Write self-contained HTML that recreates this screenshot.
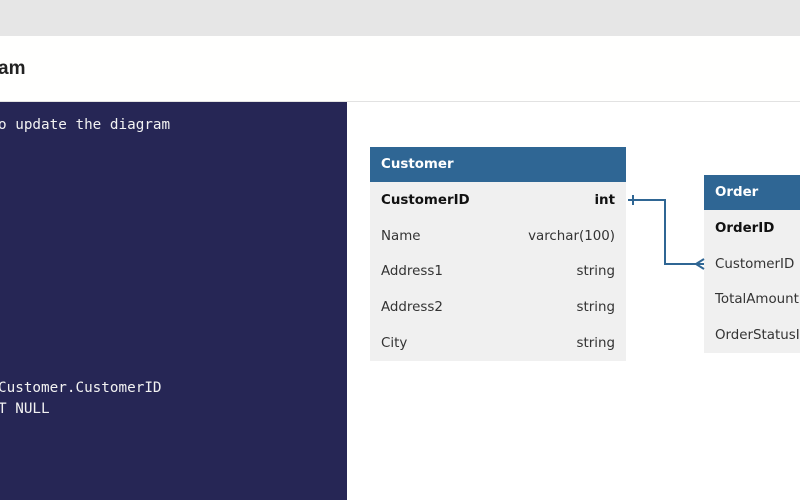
<!DOCTYPE html>
<html><head><style>
*{margin:0;padding:0;box-sizing:border-box}
body{width:800px;height:500px;overflow:hidden;background:#fff;font-family:"Liberation Sans",sans-serif;position:relative}
.top{position:absolute;left:0;top:0;width:800px;height:36px;background:#e6e6e6}
.hdr{position:absolute;left:0;top:36px;width:800px;height:66px;background:#fffffe;border-bottom:1px solid #e2e2e2}
.hdr span{position:absolute;left:-2px;top:22px;font-size:19px;font-weight:bold;color:#222}
.code{position:absolute;left:0;top:102px;width:347px;height:398px;background:#262655;color:#f2f2f2;font-family:"DejaVu Sans Mono","Liberation Mono",monospace;font-size:14.3px}
.code div{position:absolute;left:-2px;white-space:pre}
.tbl{position:absolute;background:#f0f0f0;font-family:"DejaVu Sans",sans-serif;font-size:13.4px;color:#333}
.tbl .h{background:#2f6694;color:#fff;font-weight:bold;height:35px;line-height:36px;padding-left:11px}
.tbl .r{height:35.7px;line-height:37px;padding:0 11px;display:flex;justify-content:space-between}
.b{font-weight:bold;color:#111}
</style></head><body>
<div class="top"></div>
<div class="hdr"><span>am</span></div>
<div class="code">
<div style="top:15px">o update the diagram</div>
<div style="top:278px">Customer.CustomerID</div>
<div style="top:299px">T NULL</div>
</div>
<div class="tbl" style="left:370px;top:147px;width:256px;height:214px">
<div class="h">Customer</div>
<div class="r b"><span>CustomerID</span><span>int</span></div>
<div class="r"><span>Name</span><span>varchar(100)</span></div>
<div class="r"><span>Address1</span><span>string</span></div>
<div class="r"><span>Address2</span><span>string</span></div>
<div class="r"><span>City</span><span>string</span></div>
</div>
<div class="tbl" style="left:704px;top:175px;width:120px;height:178px">
<div class="h">Order</div>
<div class="r b"><span>OrderID</span></div>
<div class="r"><span>CustomerID</span></div>
<div class="r"><span>TotalAmount</span></div>
<div class="r"><span style="white-space:nowrap">OrderStatusID</span></div>
</div>
<svg style="position:absolute;left:0;top:0" width="800" height="500">
<g stroke="#2f6694" stroke-width="2" fill="none">
<path d="M628 200H665V264H704"/>
<path d="M633 195V205"/>
<path d="M696 264L704 259M696 264L704 269"/>
</g>
</svg>
</body></html>
